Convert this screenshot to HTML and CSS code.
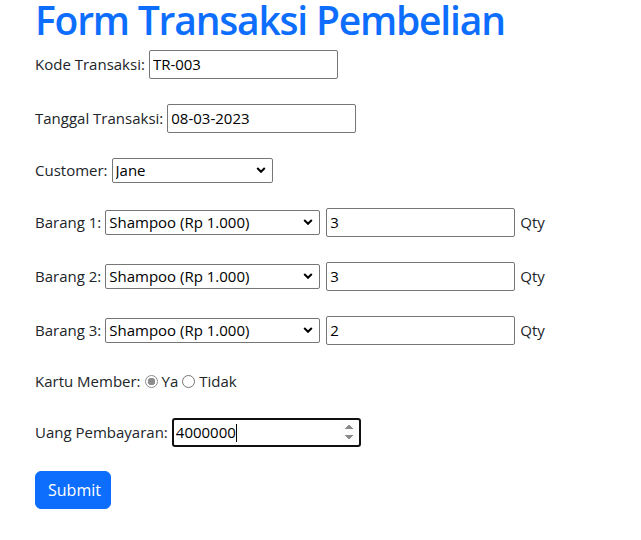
FILE: index.html
```html
<!DOCTYPE html>
<html lang="en">
<head>
    <meta charset="UTF-8">
    <meta name="viewport" content="width=device-width, initial-scale=1.0">
    <title>Form Transaksi Pembelian</title>
    <link rel="stylesheet" href="styles.css">
</head>
<body>
    <div class="container">
        <h1>Form Transaksi Pembelian</h1>
        <form>
            <div class="row">
                <label for="kode">Kode Transaksi:</label>
                <input type="text" id="kode" class="field" value="TR-003">
            </div>
            <div class="row">
                <label for="tanggal">Tanggal Transaksi:</label>
                <input type="text" id="tanggal" class="field" value="08-03-2023">
            </div>
            <div class="row row-select">
                <label for="customer">Customer:</label>
                <select id="customer" class="pick pick-customer">
                    <option>Jane</option>
                    <option>John</option>
                </select>
            </div>
            <div class="row">
                <label for="barang1">Barang 1:</label>
                <select id="barang1" class="pick pick-barang">
                    <option>Shampoo (Rp 1.000)</option>
                </select>
                <input type="text" class="field qty" value="3">
                <span class="unit">Qty</span>
            </div>
            <div class="row">
                <label for="barang2">Barang 2:</label>
                <select id="barang2" class="pick pick-barang">
                    <option>Shampoo (Rp 1.000)</option>
                </select>
                <input type="text" class="field qty" value="3">
                <span class="unit">Qty</span>
            </div>
            <div class="row">
                <label for="barang3">Barang 3:</label>
                <select id="barang3" class="pick pick-barang">
                    <option>Shampoo (Rp 1.000)</option>
                </select>
                <input type="text" class="field qty" value="2">
                <span class="unit">Qty</span>
            </div>
            <div class="row row-radio">
                <span>Kartu Member:</span>
                <input type="radio" name="member" id="ya" class="radio" checked>
                <label for="ya">Ya</label>
                <input type="radio" name="member" id="tidak" class="radio">
                <label for="tidak">Tidak</label>
            </div>
            <div class="row">
                <label for="uang">Uang Pembayaran:</label>
                <span class="focus-wrap">
                    <input type="number" id="uang" class="field field-focus" value="4000000">
                    <span class="caret"></span>
                </span>
            </div>
            <button type="button" class="btn-submit">Submit</button>
        </form>
    </div>
</body>
</html>
```

FILE: styles.css
```css
body {
    margin: 0;
    font-family: "Open Sans", "Noto Sans", sans-serif;
    font-size: 15px;
    line-height: 1.5;
    color: #212529;
    background-color: #fff;
}
.container {
    padding: 0 35px;
}
h1 {
    margin: 0 0 10px;
    font-size: 39px;
    font-weight: 600;
    letter-spacing: -1.2px;
    line-height: 1;
    color: #0d6efd;
}
.row {
    display: flex;
    align-items: center;
    gap: 4px;
    height: 30px;
    margin-bottom: 24px;
}
.row-select {
    height: 26px;
}
.row-radio {
    height: 24px;
}
.field {
    box-sizing: border-box;
    width: 189px;
    height: 29px;
    padding: 1px 3px;
    border: 1px solid #767676;
    border-radius: 2px;
    font-family: inherit;
    font-size: 15px;
    color: #000;
}
.qty {
    margin-left: 2px;
}
.unit {
    margin-left: 1px;
}
.focus-wrap {
    position: relative;
    display: flex;
}
.field-focus {
    border: 2px solid #101010;
    border-radius: 3px;
    padding: 0 2px;
    outline: none;
}
.field-focus::-webkit-inner-spin-button {
    opacity: 1;
}
.caret {
    position: absolute;
    left: 64px;
    top: 6px;
    width: 1px;
    height: 18px;
    background: #000;
}
.pick {
    box-sizing: border-box;
    height: 25px;
    padding: 0 20px 0 3px;
    border: 1px solid #767676;
    border-radius: 2px;
    font-family: inherit;
    font-size: 15px;
    color: #000;
    background: #fff url("data:image/svg+xml,%3Csvg xmlns='http://www.w3.org/2000/svg' width='10' height='6' viewBox='0 0 10 6'%3E%3Cpath d='M1.2 1l3.8 3.8 3.8-3.8' fill='none' stroke='%23000' stroke-width='2'/%3E%3C/svg%3E") no-repeat right 6px center;
    appearance: none;
    -webkit-appearance: none;
}
.pick-customer {
    width: 161px;
}
.pick-barang {
    width: 215px;
}
.radio {
    appearance: none;
    -webkit-appearance: none;
    box-sizing: border-box;
    width: 13px;
    height: 13px;
    margin: 0;
    border: 1px solid #767676;
    border-radius: 50%;
    background: #fff;
}
.radio:checked {
    border-color: #8c8c8c;
    background: radial-gradient(circle, #8c8c8c 0 3.5px, #fff 4px);
}
.btn-submit {
    box-sizing: border-box;
    width: 76px;
    height: 38px;
    padding: 6px 12px;
    border: 1px solid #0d6efd;
    border-radius: 6px;
    background-color: #0d6efd;
    color: #fff;
    font-family: inherit;
    font-size: 16px;
    line-height: 1.5;
    cursor: pointer;
}
```
